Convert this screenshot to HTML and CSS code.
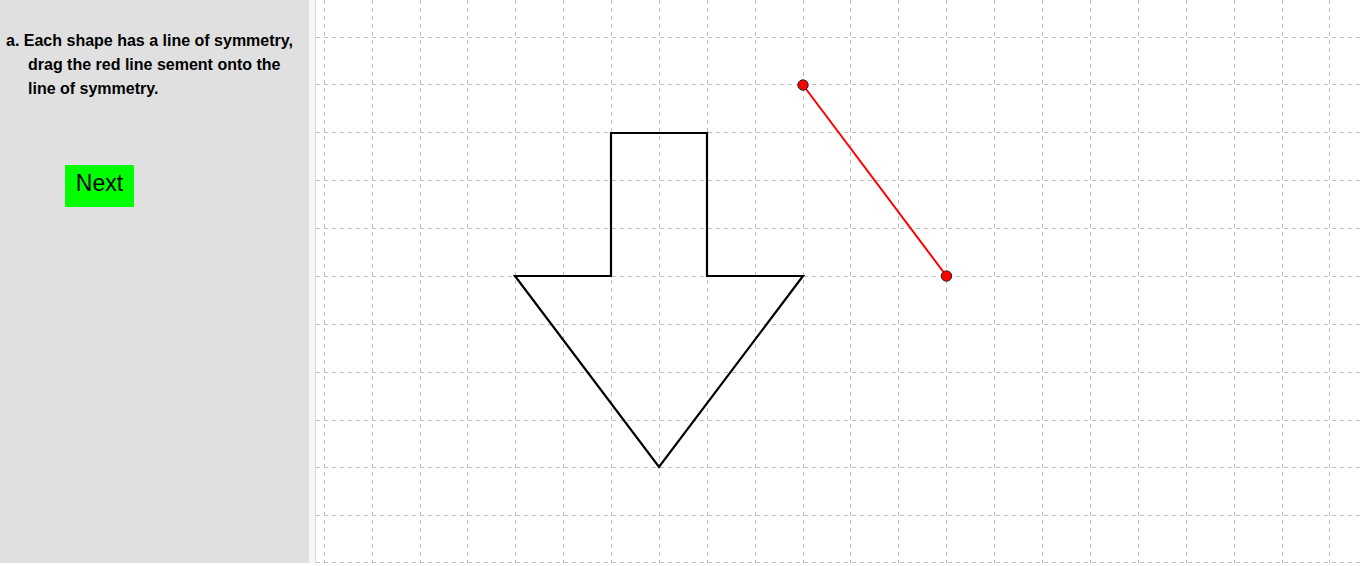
FILE: index.html
```html
<!DOCTYPE html>
<html lang="en">
<head>
<meta charset="utf-8">
<title>Line of symmetry</title>
<link rel="stylesheet" href="styles.css">
</head>
<body>
<div class="app">
  <aside class="panel">
    <p class="task">a. Each shape has a line of symmetry, drag the red line sement onto the line of symmetry.</p>
    <button class="next" type="button">Next</button>
  </aside>
  <div class="strip"></div>
  <div class="divider"></div>
  <main class="canvas">
    <svg class="board" width="1050" height="563" viewBox="0 0 1050 563">
      <g class="grid">
        <line x1="8.5" y1="0" x2="8.5" y2="563"/>
        <line x1="56.5" y1="0" x2="56.5" y2="563"/>
        <line x1="104.5" y1="0" x2="104.5" y2="563"/>
        <line x1="151.5" y1="0" x2="151.5" y2="563"/>
        <line x1="199.5" y1="0" x2="199.5" y2="563"/>
        <line x1="247.5" y1="0" x2="247.5" y2="563"/>
        <line x1="295.5" y1="0" x2="295.5" y2="563"/>
        <line x1="343.5" y1="0" x2="343.5" y2="563"/>
        <line x1="391.5" y1="0" x2="391.5" y2="563"/>
        <line x1="439.5" y1="0" x2="439.5" y2="563"/>
        <line x1="487.5" y1="0" x2="487.5" y2="563"/>
        <line x1="534.5" y1="0" x2="534.5" y2="563"/>
        <line x1="582.5" y1="0" x2="582.5" y2="563"/>
        <line x1="630.5" y1="0" x2="630.5" y2="563"/>
        <line x1="678.5" y1="0" x2="678.5" y2="563"/>
        <line x1="726.5" y1="0" x2="726.5" y2="563"/>
        <line x1="774.5" y1="0" x2="774.5" y2="563"/>
        <line x1="822.5" y1="0" x2="822.5" y2="563"/>
        <line x1="870.5" y1="0" x2="870.5" y2="563"/>
        <line x1="918.5" y1="0" x2="918.5" y2="563"/>
        <line x1="966.5" y1="0" x2="966.5" y2="563"/>
        <line x1="1013.5" y1="0" x2="1013.5" y2="563"/>
        <line x1="0" y1="37.5" x2="1048" y2="37.5"/>
        <line x1="0" y1="84.5" x2="1048" y2="84.5"/>
        <line x1="0" y1="132.5" x2="1048" y2="132.5"/>
        <line x1="0" y1="180.5" x2="1048" y2="180.5"/>
        <line x1="0" y1="228.5" x2="1048" y2="228.5"/>
        <line x1="0" y1="276.5" x2="1048" y2="276.5"/>
        <line x1="0" y1="324.5" x2="1048" y2="324.5"/>
        <line x1="0" y1="372.5" x2="1048" y2="372.5"/>
        <line x1="0" y1="420.5" x2="1048" y2="420.5"/>
        <line x1="0" y1="467.5" x2="1048" y2="467.5"/>
        <line x1="0" y1="515.5" x2="1048" y2="515.5"/>
        <line x1="0" y1="562.5" x2="1048" y2="562.5"/>
      </g>
      <polygon class="shape" points="295,133 391,133 391,276 487,276 343,467 199,276 295,276"/>
      <line class="segment" x1="487" y1="85" x2="630.5" y2="276"/>
      <circle class="point" cx="487" cy="85" r="5.2"/>
      <circle class="point" cx="630.5" cy="276" r="5.2"/>
    </svg>
  </main>
</div>
</body>
</html>
```

FILE: styles.css
```css
html, body {
  margin: 0;
  padding: 0;
  background: #ffffff;
}

body {
  font-family: "Liberation Sans", Arial, sans-serif;
  color: #000000;
}

.app {
  display: flex;
  flex-direction: row;
  width: 1366px;
  height: 563px;
  overflow: hidden;
}

.panel {
  width: 309px;
  flex: 0 0 309px;
  background: #e0e0e0;
  display: flex;
  flex-direction: column;
  align-items: flex-start;
  padding-top: 29px;
  box-sizing: border-box;
}

.task {
  margin: 0;
  padding-left: 28px;
  padding-right: 10px;
  text-indent: -22px;
  font-size: 16px;
  font-weight: bold;
  line-height: 24px;
  color: #000000;
}

.next {
  margin-top: 64px;
  margin-left: 65px;
  width: 69px;
  height: 42px;
  padding: 0 0 5px 0;
  border: none;
  background: #00ff00;
  color: #000000;
  font-family: "Liberation Sans", Arial, sans-serif;
  font-size: 23px;
  line-height: 37px;
  box-sizing: border-box;
  cursor: pointer;
}

.strip {
  width: 6px;
  flex: 0 0 6px;
  background: #f6f6f6;
}

.divider {
  width: 1px;
  flex: 0 0 1px;
  background: #dadada;
}

.canvas {
  flex: 1 1 auto;
  background: #ffffff;
  overflow: hidden;
}

.board {
  display: block;
}

.grid line {
  stroke: #c0c0c0;
  stroke-width: 1;
  stroke-dasharray: 4 4;
}

.shape {
  fill: none;
  stroke: #000000;
  stroke-width: 2.2;
  stroke-linejoin: miter;
}

.segment {
  stroke: #ff0000;
  stroke-width: 2;
}

.point {
  fill: #ff0000;
  stroke: #222222;
  stroke-width: 1;
}
```
